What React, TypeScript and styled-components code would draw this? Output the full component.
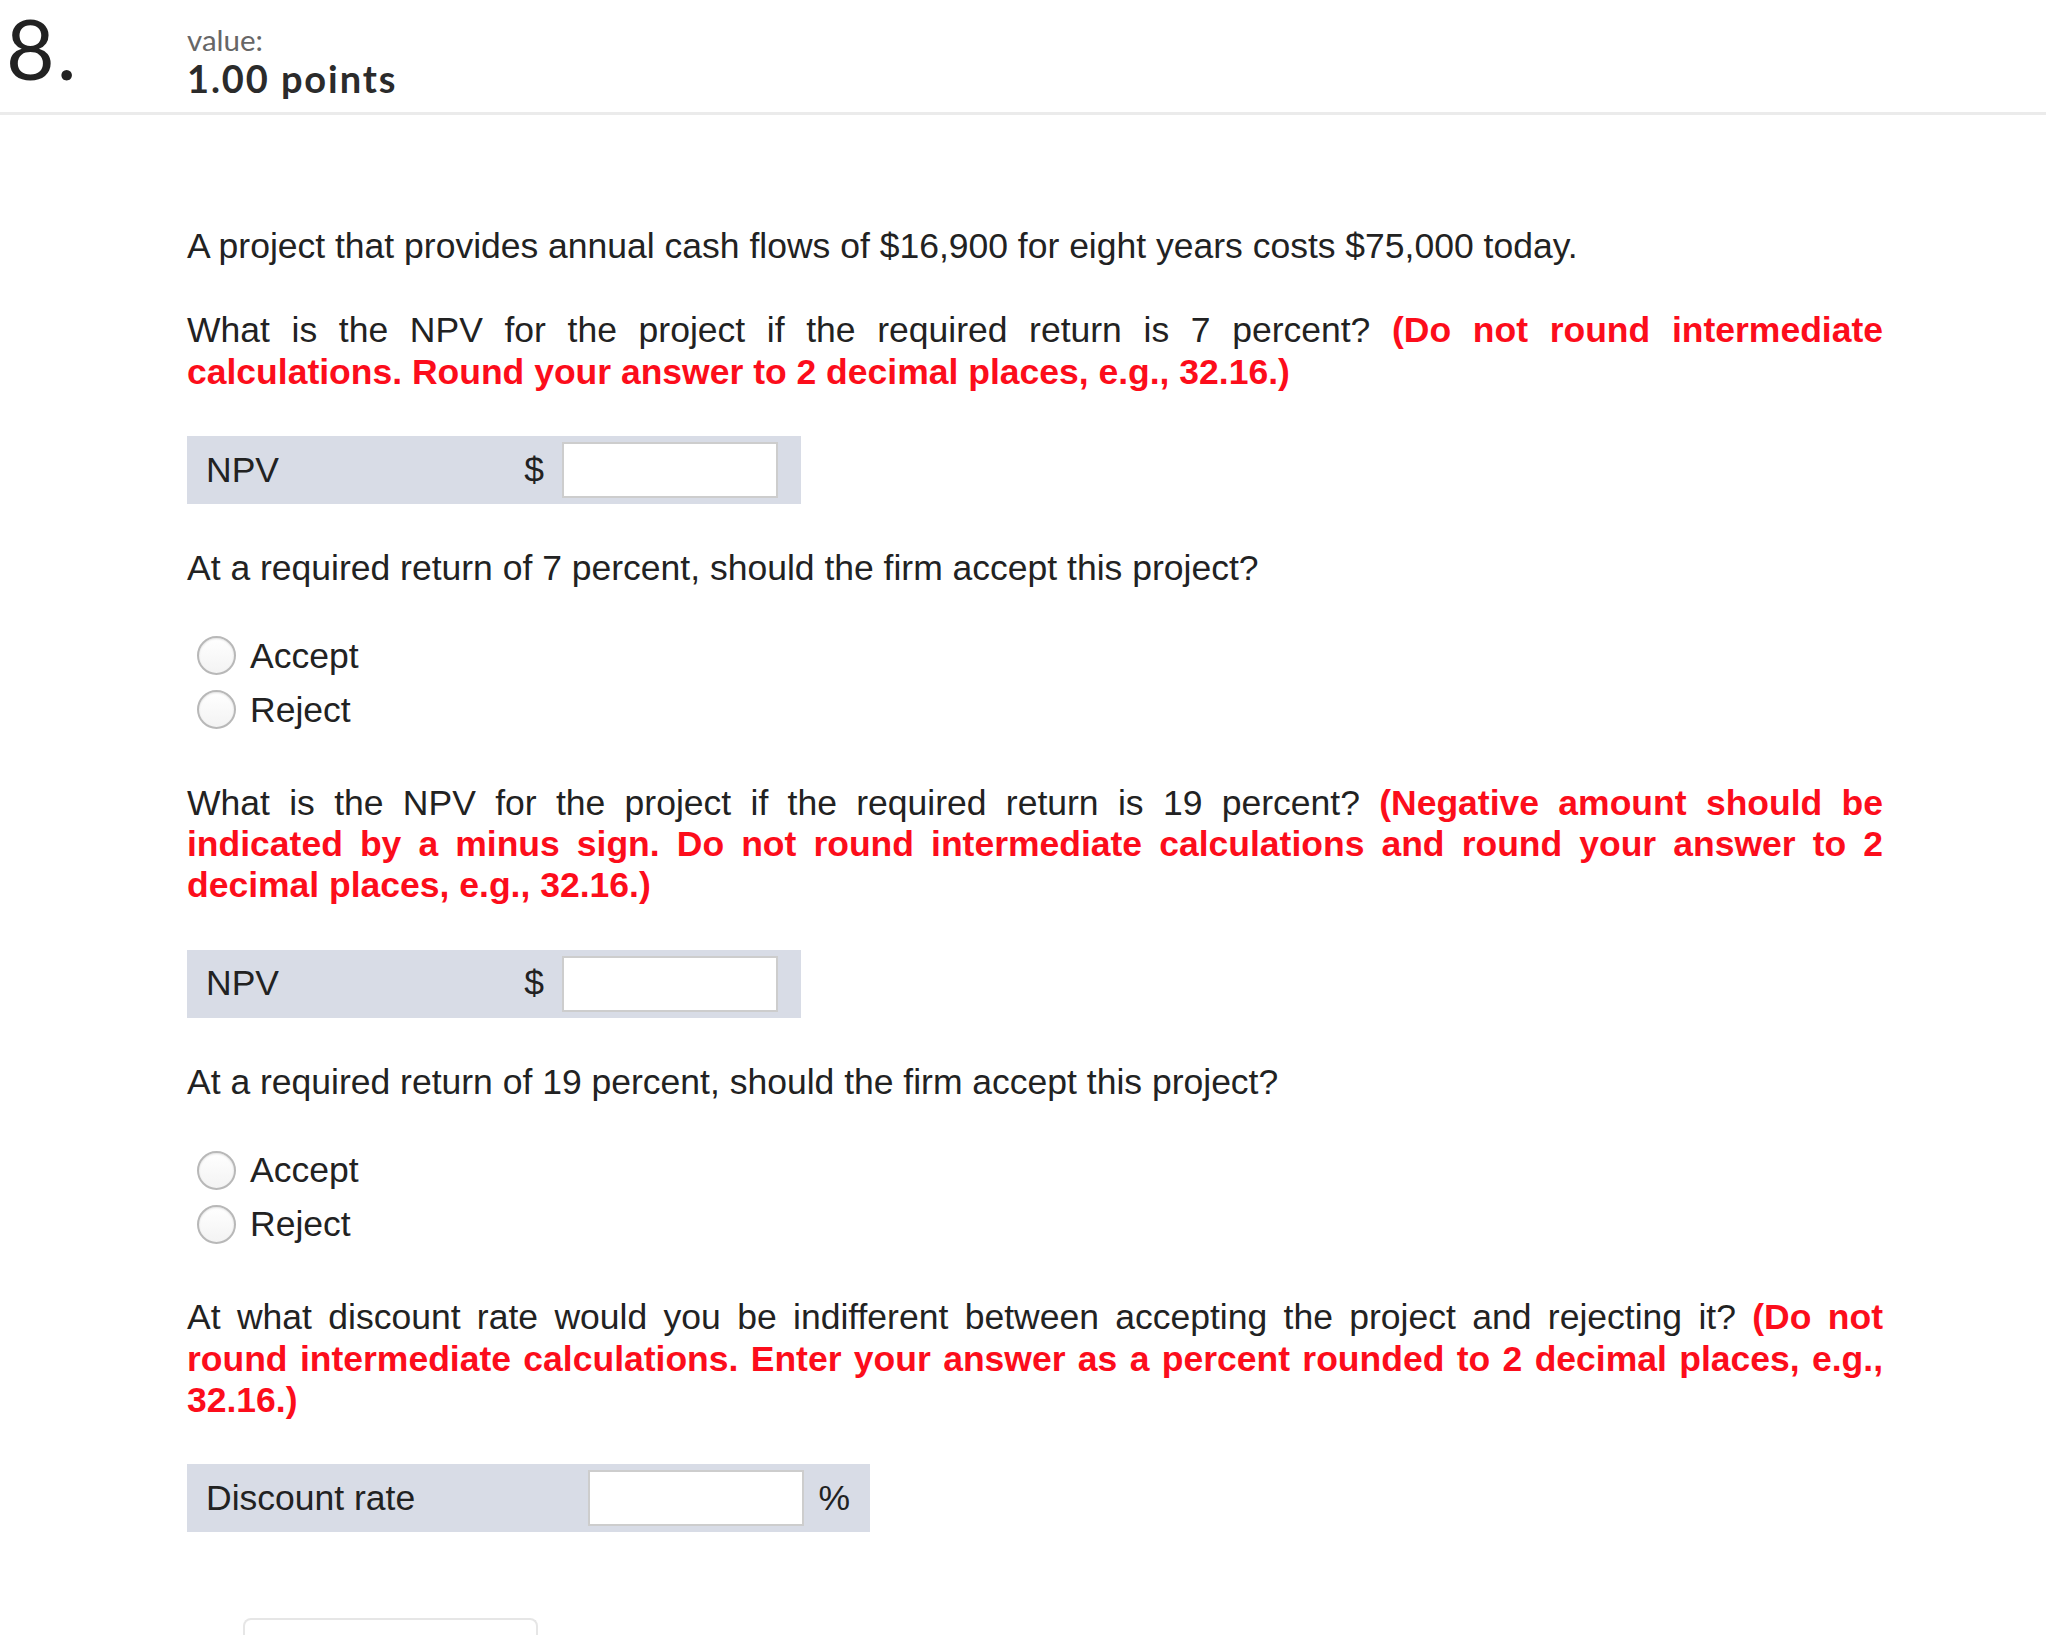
import React from "react";
import styled, { createGlobalStyle } from "styled-components";

const GlobalStyle = createGlobalStyle`
  html, body {
    margin: 0;
    padding: 0;
    background: #fff;
  }
  body {
    font-family: "Liberation Sans", Arial, sans-serif;
    color: #222;
  }
`;

const Page = styled.div`
  width: 2046px;
  min-height: 1635px;
  overflow: hidden;
`;

const Header = styled.div`
  display: flex;
  align-items: flex-start;
  height: 112px;
  border-bottom: 3px solid #ebebeb;
  font-family: Lato, "Open Sans", sans-serif;
`;

const Number = styled.div`
  width: 187px;
  padding-left: 6px;
  box-sizing: border-box;
  font-size: 84px;
  line-height: 1;
  color: #222;
  margin-top: 6px;
  letter-spacing: 2px;
`;

const ValueBlock = styled.div`
  display: flex;
  flex-direction: column;
  margin-top: 24px;
`;

const ValueLabel = styled.span`
  font-size: 29.5px;
  color: #666;
  line-height: 32px;
`;

const Points = styled.span`
  font-size: 38px;
  font-weight: 700;
  color: #2b2b2b;
  line-height: 44px;
  letter-spacing: 1.9px;
`;

const Content = styled.div`
  width: 1696px;
  padding: 111px 0 0 187px;
`;

const Para = styled.p<{ $justify?: boolean; $after?: number }>`
  margin: 0 0 ${(p) => p.$after ?? 43}px;
  font-size: 35.5px;
  line-height: 41.4px;
  color: #222;
  text-align: ${(p) => (p.$justify ? "justify" : "left")};
`;

const Note = styled.span`
  color: #fc0d1b;
  font-weight: 700;
`;

const AnswerRow = styled.div<{ $width: number }>`
  display: flex;
  align-items: center;
  width: ${(p) => p.$width}px;
  height: 68px;
  background: #d8dce6;
  box-sizing: border-box;
  padding: 0 0 0 19px;
  margin: 0 0 44px;
  font-size: 35.5px;
`;

const RowLabel = styled.span`
  flex: 1;
`;

const Unit = styled.span<{ $side: "left" | "right" }>`
  margin: ${(p) => (p.$side === "left" ? "0 18px 0 0" : "0 20px 0 14px")};
`;

const AnswerInput = styled.input<{ $end?: boolean }>`
  width: 216px;
  height: 56px;
  box-sizing: border-box;
  border: 2px solid #cdcdcd;
  background: #fff;
  margin-right: ${(p) => (p.$end ? 23 : 0)}px;
  outline: none;
`;

const Choices = styled.div`
  display: flex;
  flex-direction: column;
  gap: 14px;
  margin: 0 0 53px;
`;

const Choice = styled.label`
  display: flex;
  align-items: center;
  gap: 14px;
  padding-left: 10px;
  font-size: 35.5px;
  line-height: 40px;
`;

const Radio = styled.span`
  width: 35px;
  height: 35px;
  border-radius: 50%;
  border: 2px solid #b8b8b8;
  background: linear-gradient(#fff, #f3f3f3);
  box-shadow: inset 0 1px 2px rgba(0, 0, 0, 0.12);
`;

const NextButton = styled.div`
  width: 291px;
  height: 40px;
  margin: 86px 0 0 56px;
  border: 2px solid #e6e6e6;
  border-bottom: none;
  border-radius: 8px 8px 0 0;
`;

const RadioGroup = ({ name }: { name: string }) => (
  <Choices>
    {["Accept", "Reject"].map((opt) => (
      <Choice key={name + opt}>
        <Radio />
        {opt}
      </Choice>
    ))}
  </Choices>
);

const App = () => {
  return (
    <Page>
      <GlobalStyle />
      <Header>
        <Number>8.</Number>
        <ValueBlock>
          <ValueLabel>value:</ValueLabel>
          <Points>1.00 points</Points>
        </ValueBlock>
      </Header>
      <Content>
        <Para>
          A project that provides annual cash flows of $16,900 for eight years
          costs $75,000 today.
        </Para>
        <Para $justify>
          What is the NPV for the project if the required return is 7 percent?{" "}
          <Note>
            (Do not round intermediate calculations. Round your answer to 2
            decimal places, e.g., 32.16.)
          </Note>
        </Para>
        <AnswerRow $width={614}>
          <RowLabel>NPV</RowLabel>
          <Unit $side="left">$</Unit>
          <AnswerInput $end />
        </AnswerRow>
        <Para $after={46}>
          At a required return of 7 percent, should the firm accept this
          project?
        </Para>
        <RadioGroup name="q1" />
        <Para $justify>
          What is the NPV for the project if the required return is 19 percent?{" "}
          <Note>
            (Negative amount should be indicated by a minus sign. Do not round
            intermediate calculations and round your answer to 2 decimal
            places, e.g., 32.16.)
          </Note>
        </Para>
        <AnswerRow $width={614}>
          <RowLabel>NPV</RowLabel>
          <Unit $side="left">$</Unit>
          <AnswerInput $end />
        </AnswerRow>
        <Para $after={47}>
          At a required return of 19 percent, should the firm accept this
          project?
        </Para>
        <RadioGroup name="q2" />
        <Para $justify>
          At what discount rate would you be indifferent between accepting the
          project and rejecting it?{" "}
          <Note>
            (Do not round intermediate calculations. Enter your answer as a
            percent rounded to 2 decimal places, e.g., 32.16.)
          </Note>
        </Para>
        <AnswerRow $width={683}>
          <RowLabel>Discount rate</RowLabel>
          <AnswerInput />
          <Unit $side="right">%</Unit>
        </AnswerRow>
        <NextButton />
      </Content>
    </Page>
  );
};

export default App;
